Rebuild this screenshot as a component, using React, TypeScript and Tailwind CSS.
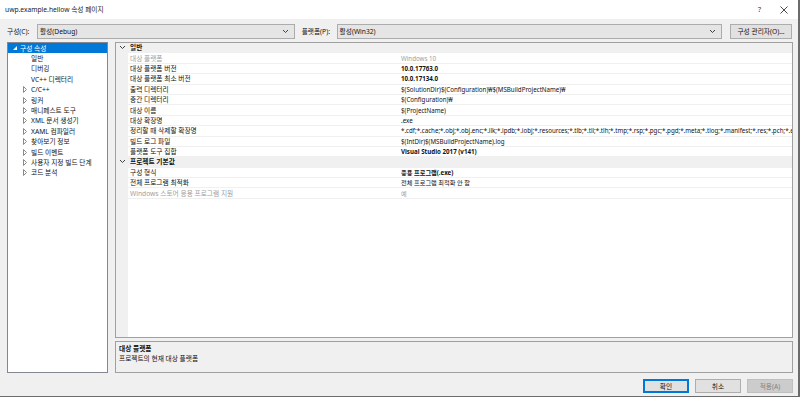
const font = { fontFamily: '"Noto Sans", "Noto Sans CJK KR", sans-serif' }

type TreeItem = { label: string; level: number; arrow?: 'open' | 'closed'; selected?: boolean }

const tree: TreeItem[] = [
  { label: '구성 속성', level: 0, arrow: 'open', selected: true },
  { label: '일반', level: 1 },
  { label: '디버깅', level: 1 },
  { label: 'VC++ 디렉터리', level: 1 },
  { label: 'C/C++', level: 1, arrow: 'closed' },
  { label: '링커', level: 1, arrow: 'closed' },
  { label: '매니페스트 도구', level: 1, arrow: 'closed' },
  { label: 'XML 문서 생성기', level: 1, arrow: 'closed' },
  { label: 'XAML 컴파일러', level: 1, arrow: 'closed' },
  { label: '찾아보기 정보', level: 1, arrow: 'closed' },
  { label: '빌드 이벤트', level: 1, arrow: 'closed' },
  { label: '사용자 지정 빌드 단계', level: 1, arrow: 'closed' },
  { label: '코드 분석', level: 1, arrow: 'closed' },
]

type Row =
  | { kind: 'cat'; label: string }
  | { kind: 'prop'; name: string; value: string; bold?: boolean; disabled?: boolean }

const rows: Row[] = [
  { kind: 'cat', label: '일반' },
  { kind: 'prop', name: '대상 플랫폼', value: 'Windows 10', disabled: true },
  { kind: 'prop', name: '대상 플랫폼 버전', value: '10.0.17763.0', bold: true },
  { kind: 'prop', name: '대상 플랫폼 최소 버전', value: '10.0.17134.0', bold: true },
  { kind: 'prop', name: '출력 디렉터리', value: '$(SolutionDir)$(Configuration)₩$(MSBuildProjectName)₩' },
  { kind: 'prop', name: '중간 디렉터리', value: '$(Configuration)₩' },
  { kind: 'prop', name: '대상 이름', value: '$(ProjectName)' },
  { kind: 'prop', name: '대상 확장명', value: '.exe' },
  {
    kind: 'prop',
    name: '정리할 때 삭제할 확장명',
    value:
      '*.cdf;*.cache;*.obj;*.obj.enc;*.ilk;*.ipdb;*.iobj;*.resources;*.tlb;*.tli;*.tlh;*.tmp;*.rsp;*.pgc;*.pgd;*.meta;*.tlog;*.manifest;*.res;*.pch;*.exp;*.idb;*.rep;*.xdc;*.pdb',
  },
  { kind: 'prop', name: '빌드 로그 파일', value: '$(IntDir)$(MSBuildProjectName).log' },
  { kind: 'prop', name: '플랫폼 도구 집합', value: 'Visual Studio 2017 (v141)', bold: true },
  { kind: 'cat', label: '프로젝트 기본값' },
  { kind: 'prop', name: '구성 형식', value: '응용 프로그램(.exe)', bold: true },
  { kind: 'prop', name: '전체 프로그램 최적화', value: '전체 프로그램 최적화 안 함' },
  { kind: 'prop', name: 'Windows 스토어 응용 프로그램 지원', value: '예', disabled: true },
]

function Chevron() {
  return (
    <svg width="7" height="5" viewBox="0 0 7 5" className="shrink-0">
      <path d="M1 1 L3.5 3.5 L6 1" fill="none" stroke="#404040" strokeWidth="1" />
    </svg>
  )
}

function TreeArrow({ open, white }: { open: boolean; white?: boolean }) {
  if (open) {
    return (
      <svg width="4" height="4" viewBox="0 0 4 4" className="shrink-0">
        <path d="M4 0 L4 4 L0 4 Z" fill={white ? '#ffffff' : '#404040'} />
      </svg>
    )
  }
  return (
    <svg width="4" height="7" viewBox="0 0 4 7" className="shrink-0">
      <path d="M0.5 0.5 L3.5 3.5 L0.5 6.5 Z" fill="none" stroke="#8a8a8a" strokeWidth="1" />
    </svg>
  )
}

function Dropdown({ text, className }: { text: string; className: string }) {
  return (
    <div
      className={`${className} h-[15px] flex items-center justify-between border border-[#acacac] bg-[#e5e5e5] pl-[2px] pr-[5px]`}
    >
      <span className="text-[6.7px] leading-[9px] whitespace-nowrap text-[#111]">{text}</span>
      <Chevron />
    </div>
  )
}

export default function App() {
  return (
    <div
      style={font}
      className="w-[800px] h-[397px] flex flex-col bg-[#f0f0f0] border-r-2 border-b border-[#6b6b6b] overflow-hidden text-[#111]"
    >
      {/* title bar */}
      <div className="h-[19px] shrink-0 bg-white flex items-center pl-[5px] pr-[10px]">
        <span className="text-[6.7px] leading-[9px] whitespace-nowrap text-[#222]">uwp.example.hellow 속성 페이지</span>
        <span className="ml-auto text-[7px] leading-[9px] text-[#333] mr-[19px]">?</span>
        <svg width="8" height="8" viewBox="0 0 8 8">
          <path d="M0.5 0.5 L7.5 7.5 M7.5 0.5 L0.5 7.5" stroke="#333" strokeWidth="0.9" />
        </svg>
      </div>

      {/* config row */}
      <div className="h-[15px] mt-[5px] shrink-0 flex items-center pl-[7px] pr-[6px] whitespace-nowrap">
        <span className="text-[6.7px] leading-[9px] w-[30px]">구성(C):</span>
        <Dropdown text="활성(Debug)" className="w-[258px]" />
        <span className="text-[6.7px] leading-[9px] ml-[7px] w-[35px]">플랫폼(P):</span>
        <Dropdown text="활성(Win32)" className="w-[386px]" />
        <div className="ml-[8px] w-[62px] h-[15px] flex items-center justify-center border border-[#adadad] bg-[#e1e1e1] text-[6.7px] leading-[9px]">
          구성 관리자(O)...
        </div>
      </div>

      {/* main */}
      <div className="flex mt-[3px] h-[331px] shrink-0 pl-[7px] pr-[5px] gap-[7px]">
        {/* tree */}
        <div className="w-[101px] shrink-0 bg-white border border-[#828790]">
          {tree.map((t) => (
            <div
              key={t.label}
              className={`h-[10.4px] flex items-center text-[6.7px] leading-[9px] whitespace-nowrap ${
                t.selected ? 'bg-[#0078d7] text-white' : 'text-[#111]'
              }`}
            >
              <div className={`${t.level === 0 ? 'w-[9px]' : 'w-[19px]'} flex justify-end shrink-0`}>
                {t.arrow && <TreeArrow open={t.arrow === 'open'} white={t.selected} />}
              </div>
              <span className={t.level === 0 ? 'ml-[3px]' : 'ml-[4px]'}>{t.label}</span>
            </div>
          ))}
        </div>

        {/* grid + description */}
        <div className="flex-1 flex flex-col gap-[3px] min-w-0">
          <div className="h-[296px] bg-white border border-[#a0a0a0] relative overflow-hidden">
            <div className="absolute left-0 top-0 bottom-0 w-[12px] bg-[#f0f0f0]" />
            <div className="relative">
              {rows.map((r, i) =>
                r.kind === 'cat' ? (
                  <div key={i} className="h-[10.4px] flex items-center bg-[#f0f0f0] border-b border-[#f0f0f0]">
                    <div className="w-[12px] flex justify-center">
                      <Chevron />
                    </div>
                    <span className="ml-[2px] text-[6.7px] font-bold leading-[9px] whitespace-nowrap">{r.label}</span>
                  </div>
                ) : (
                  <div
                    key={i}
                    className="h-[10.4px] flex items-center border-b border-[#f0f0f0] whitespace-nowrap overflow-hidden"
                  >
                    <div className="w-[12px] shrink-0" />
                    <span
                      className={`ml-[2px] w-[271px] shrink-0 text-[6.7px] leading-[9px] ${
                        r.disabled ? 'text-[#a0a0a0]' : 'text-[#111]'
                      }`}
                    >
                      {r.name}
                    </span>
                    <span
                      className={`text-[6.2px] leading-[9px] ${r.bold ? 'font-bold' : ''} ${
                        r.disabled ? 'text-[#a0a0a0]' : 'text-[#111]'
                      }`}
                    >
                      {r.value}
                    </span>
                  </div>
                ),
              )}
            </div>
          </div>
          <div className="h-[32px] border border-[#a0a0a0] bg-[#f0f0f0] px-[3px] pt-[2px]">
            <div className="text-[6.7px] font-bold leading-[9.5px]">대상 플랫폼</div>
            <div className="text-[6.7px] leading-[9.5px]">프로젝트의 현재 대상 플랫폼</div>
          </div>
        </div>
      </div>

      {/* buttons */}
      <div className="flex justify-end gap-[6px] mt-[6px] pr-[5px]">
        <div className="w-[46px] h-[14px] flex items-center justify-center border-2 border-[#0078d7] bg-[#e1e1e1] text-[6.7px] leading-[9px]">
          확인
        </div>
        <div className="w-[46px] h-[14px] flex items-center justify-center border border-[#adadad] bg-[#e1e1e1] text-[6.7px] leading-[9px]">
          취소
        </div>
        <div className="w-[46px] h-[14px] flex items-center justify-center border border-[#bfbfbf] bg-[#cccccc] text-[6.7px] leading-[9px] text-[#838383]">
          적용(A)
        </div>
      </div>
    </div>
  )
}
